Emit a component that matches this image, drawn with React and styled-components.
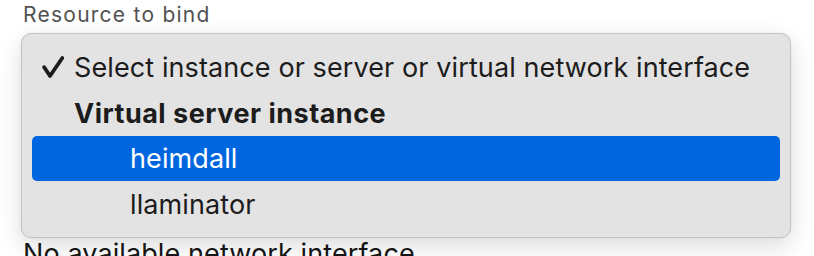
import React from "react";
import styled, { createGlobalStyle } from "styled-components";

const Global = createGlobalStyle`
  html, body { margin: 0; padding: 0; background: #ffffff; }
  body { width: 814px; height: 256px; overflow: hidden; }
`;

const Page = styled.div`
  position: relative;
  width: 814px;
  height: 256px;
  padding: 0 0 0 23px;
  box-sizing: border-box;
  font-family: Inter, "Noto Sans", sans-serif;
  display: flex;
  flex-direction: column;
`;

const Label = styled.div`
  font-size: 21px;
  line-height: 29px;
  color: #525252;
  letter-spacing: 1.25px;
`;

const FieldSpace = styled.div`
  height: 208px;
  flex-shrink: 0;
`;

const Helper = styled.div`
  font-size: 27px;
  line-height: 34px;
  color: #161616;
  letter-spacing: 0.1px;
  white-space: nowrap;
`;

const Menu = styled.ul`
  position: absolute;
  left: 21px;
  top: 33px;
  width: 770px;
  height: 205px;
  box-sizing: border-box;
  margin: 0;
  padding: 10px 10px;
  list-style: none;
  background: #e3e3e3;
  border: 1px solid #c4c4c4;
  border-radius: 10px;
  box-shadow: 0 8px 24px rgba(0, 0, 0, 0.14), 0 0 2px rgba(0, 0, 0, 0.08);
  display: flex;
  flex-direction: column;
`;

const Row = styled.li`
  height: 46px;
  display: flex;
  align-items: center;
  padding-left: ${(p) => p.$indent}px;
  padding-top: 1px;
  box-sizing: border-box;
  border-radius: 5px;
  font-size: 27px;
  letter-spacing: ${(p) => (p.$bold ? "0.5px" : "0.1px")};
  font-weight: ${(p) => (p.$bold ? 700 : 400)};
  color: ${(p) => (p.$active ? "#ffffff" : "#1c1c1c")};
  background: ${(p) => (p.$active ? "#0066e0" : "transparent")};
`;

const Check = styled.svg`
  width: 22px;
  height: 22px;
  margin-left: -32px;
  margin-right: 10px;
`;

export default function App() {
  return (
    <>
      <Global />
      <Page>
        <Label>Resource to bind</Label>
        <FieldSpace />
        <Helper>No available network interface</Helper>
        <Menu>
          <Row $indent={42}>
            <Check viewBox="0 0 22 22">
              <path d="M2.2 11.2 L8 20 L20.3 2" fill="none" stroke="#1c1c1c" strokeWidth="3.8" strokeLinecap="round" strokeLinejoin="round" />
            </Check>
            Select instance or server or virtual network interface
          </Row>
          <Row $indent={42} $bold>Virtual server instance</Row>
          <Row $indent={98} $active>heimdall</Row>
          <Row $indent={98}>llaminator</Row>
        </Menu>
      </Page>
    </>
  );
}
